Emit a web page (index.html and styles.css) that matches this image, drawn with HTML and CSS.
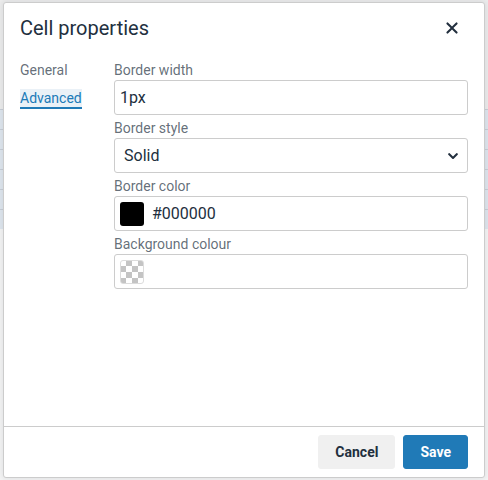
FILE: index.html
```html
<!DOCTYPE html>
<html lang="en">
<head>
<meta charset="utf-8">
<title>Cell properties</title>
<link rel="stylesheet" href="styles.css">
</head>
<body>
<div class="page">
  <div class="page-top"></div>
  <div class="page-table">
    <div class="page-row"></div>
    <div class="page-row"></div>
    <div class="page-row"></div>
    <div class="page-row"></div>
    <div class="page-row"></div>
    <div class="page-row"></div>
  </div>
</div>
<div class="dialog" role="dialog">
  <div class="dialog-header">
    <div class="dialog-title">Cell properties</div>
    <button class="close-btn" aria-label="Close">
      <svg width="24" height="24" viewBox="0 0 24 24"><path fill="#222f3e" d="M17.3 8.2L13.4 12l3.9 3.8a1 1 0 01-1.5 1.5L12 13.4l-3.8 3.9a1 1 0 01-1.5-1.5l3.9-3.8-3.9-3.8a1 1 0 011.5-1.5l3.8 3.9 3.8-3.9a1 1 0 011.5 1.5z"/></svg>
    </button>
  </div>
  <div class="dialog-body">
    <div class="tabs">
      <div class="tab">General</div>
      <div class="tab active">Advanced</div>
    </div>
    <div class="form">
      <div class="group">
        <label class="label">Border width</label>
        <div class="field"><span class="val-input">1px</span></div>
      </div>
      <div class="group">
        <label class="label">Border style</label>
        <div class="field select"><span class="val-select">Solid</span>
          <svg class="chev" width="24" height="24" viewBox="0 0 24 24"><path fill="#222f3e" d="M12 15c-.3 0-.5-.1-.7-.3l-4-4a1 1 0 011.4-1.4l3.3 3.3 3.3-3.3a1 1 0 011.4 1.4l-4 4a1 1 0 01-.7.3z"/></svg>
        </div>
      </div>
      <div class="group">
        <label class="label">Border color</label>
        <div class="field color"><span class="swatch black"></span><span class="val-color">#000000</span></div>
      </div>
      <div class="group">
        <label class="label">Background colour</label>
        <div class="field color"><span class="swatch checker"></span></div>
      </div>
    </div>
  </div>
  <div class="dialog-footer">
    <button class="btn btn-secondary">Cancel</button>
    <button class="btn btn-primary">Save</button>
  </div>
</div>
</body>
</html>
```
FILE: styles.css
```css
html, body {
  margin: 0;
  padding: 0;
}
body {
  width: 488px;
  height: 480px;
  overflow: hidden;
  background: #f4f4f4;
  font-family: Roboto, "Noto Sans", sans-serif;
  color: #222f3e;
  position: relative;
}
.page {
  width: 488px;
  height: 480px;
  display: flex;
  flex-direction: column;
}
.page-top {
  height: 109px;
  background: #ececec;
}
.page-table {
  display: flex;
  flex-direction: column;
}
.page-row {
  height: 19px;
  border-top: 1px solid #c8ced6;
  background: #dfe6ee;
}
.dialog {
  position: absolute;
  left: 3px;
  top: 2px;
  width: 482px;
  height: 476px;
  box-sizing: border-box;
  background: #fff;
  border: 1px solid #cccccc;
  border-radius: 3px;
  box-shadow: 0 0 6px rgba(34, 47, 62, 0.12);
  display: flex;
  flex-direction: column;
}
.dialog-header {
  display: flex;
  align-items: center;
  justify-content: space-between;
  padding: 9px 16px 0 16px;
}
.dialog-title {
  font-size: 20px;
  line-height: 26px;
  color: #222f3e;
}
.close-btn {
  width: 32px;
  height: 32px;
  padding: 0;
  border: 0;
  background: transparent;
  display: flex;
  align-items: center;
  justify-content: center;
}
.dialog-body {
  flex: 1;
  display: flex;
  padding: 17px 16px 0 16px;
}
.tabs {
  display: flex;
  flex-direction: column;
  align-items: flex-start;
  gap: 8px;
  width: 94px;
  flex: 0 0 94px;
}
.tab {
  font-size: 14px;
  line-height: 18px;
  border-bottom: 2px solid transparent;
  color: rgba(34, 47, 62, 0.7);
}
.tab.active {
  color: #207ab7;
  border-bottom-color: #207ab7;
  background: #eaf1f7;
}
.form {
  flex: 1;
  display: flex;
  flex-direction: column;
  gap: 4px;
}
.group {
  display: flex;
  flex-direction: column;
}
.label {
  font-size: 14px;
  line-height: 18px;
  padding-bottom: 1px;
  color: rgba(34, 47, 62, 0.7);
}
.field {
  box-sizing: border-box;
  height: 35px;
  border: 1px solid #cccccc;
  border-radius: 3px;
  display: flex;
  align-items: center;
  font-size: 16px;
  color: #222f3e;
}
.val-input {
  padding-left: 5px;
}
.select {
  justify-content: space-between;
  padding: 0 2px 0 9px;
}
.color {
  padding-left: 5px;
  gap: 8px;
}
.swatch {
  width: 24px;
  height: 24px;
  box-sizing: border-box;
  border-radius: 3px;
}
.swatch.black {
  background: #000;
}
.swatch.checker {
  border: 1px solid #dcdcdc;
  background-color: #fff;
  background-image:
    linear-gradient(45deg, #c4c4c4 25%, transparent 25%, transparent 75%, #c4c4c4 75%),
    linear-gradient(45deg, #c4c4c4 25%, transparent 25%, transparent 75%, #c4c4c4 75%);
  background-size: 12px 12px;
  background-position: -1px -1px, 5px 5px;
}
.dialog-footer {
  display: flex;
  justify-content: flex-end;
  gap: 8px;
  border-top: 1px solid #cccccc;
  padding: 8px 16px 8px 16px;
}
.btn {
  font-family: Roboto, "Noto Sans", sans-serif;
  font-size: 14px;
  font-weight: 700;
  line-height: 24px;
  height: 34px;
  box-sizing: border-box;
  border-radius: 3px;
  padding: 4px 16px;
}
.btn-secondary {
  background: #f0f0f0;
  border: 1px solid #f0f0f0;
  color: #222f3e;
}
.btn-primary {
  background: #207ab7;
  border: 1px solid #207ab7;
  color: #fff;
}
```
